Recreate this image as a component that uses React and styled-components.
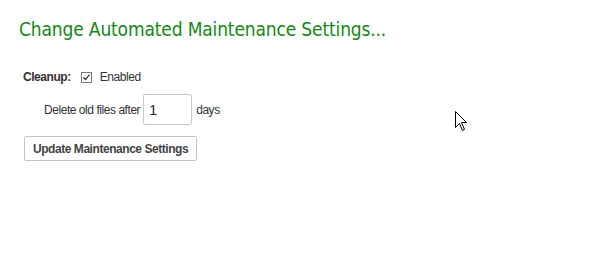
import React from "react";
import styled, { createGlobalStyle } from "styled-components";

const Global = createGlobalStyle`
  body {
    margin: 0;
    background: #fff;
  }
`;

const Page = styled.div`
  padding: 18px 19px;
  font-family: "Liberation Sans Narrow", "Arial Narrow", "Liberation Sans", sans-serif;
  font-size: 12px;
  letter-spacing: -0.45px;
  color: #333;
`;

const Title = styled.h1`
  margin: 0 0 30px;
  font-family: "DejaVu Sans Condensed", "DejaVu Sans", sans-serif;
  font-weight: normal;
  font-size: 19px;
  color: #148814;
  letter-spacing: -0.15px;
`;

const Row = styled.div`
  display: flex;
  align-items: center;
  padding-left: ${(p) => p.$indent || 0}px;
  margin-bottom: ${(p) => p.$gap || 0}px;
`;

const Label = styled.span`
  font-weight: bold;
  margin-right: 10px;
`;

const Check = styled.span`
  width: 9px;
  height: 9px;
  border: 1px solid #777;
  background: #fff;
  display: inline-flex;
  align-items: center;
  justify-content: center;
  margin-right: 8px;
  svg {
    display: block;
  }
`;

const NumInput = styled.input`
  box-sizing: border-box;
  width: 49px;
  height: 31px;
  border: 1px solid #c9c9c9;
  border-radius: 2px;
  margin: 0 4px 0 3px;
  padding: 0 5px;
  font: inherit;
  font-size: 14px;
  color: #222;
`;

const Button = styled.button`
  height: 25px;
  padding: 0 8px;
  border: 1px solid #c4c4c4;
  border-radius: 2px;
  background: #fff;
  font: inherit;
  font-weight: bold;
  font-size: 12px;
  letter-spacing: -0.45px;
  color: #444;
  margin-left: 5px;
`;

const Cursor = styled.svg`
  position: absolute;
  left: 455px;
  top: 111px;
`;

export default function App() {
  return (
    <Page>
      <Global />
      <Title>Change Automated Maintenance Settings...</Title>
      <Row $indent={4} $gap={10}>
        <Label>Cleanup:</Label>
        <Check>
          <svg width="7" height="7" viewBox="0 0 7 7">
            <path d="M0.5 3.5 L2.5 5.5 L6.5 0.5" fill="none" stroke="#222" strokeWidth="1.2" />
          </svg>
        </Check>
        <span>Enabled</span>
      </Row>
      <Row $indent={25} $gap={11}>
        <span>Delete old files after</span>
        <NumInput defaultValue="1" />
        <span>days</span>
      </Row>
      <Row>
        <Button>Update Maintenance Settings</Button>
      </Row>
      <Cursor width="13" height="21" viewBox="0 0 13 21">
        <path d="M0.5 0.5 L0.5 16.5 L4.5 12.5 L7.5 19.5 L9.5 18.5 L6.5 11.5 L11.5 11.5 Z" fill="#fff" stroke="#000" strokeWidth="1" />
      </Cursor>
    </Page>
  );
}
